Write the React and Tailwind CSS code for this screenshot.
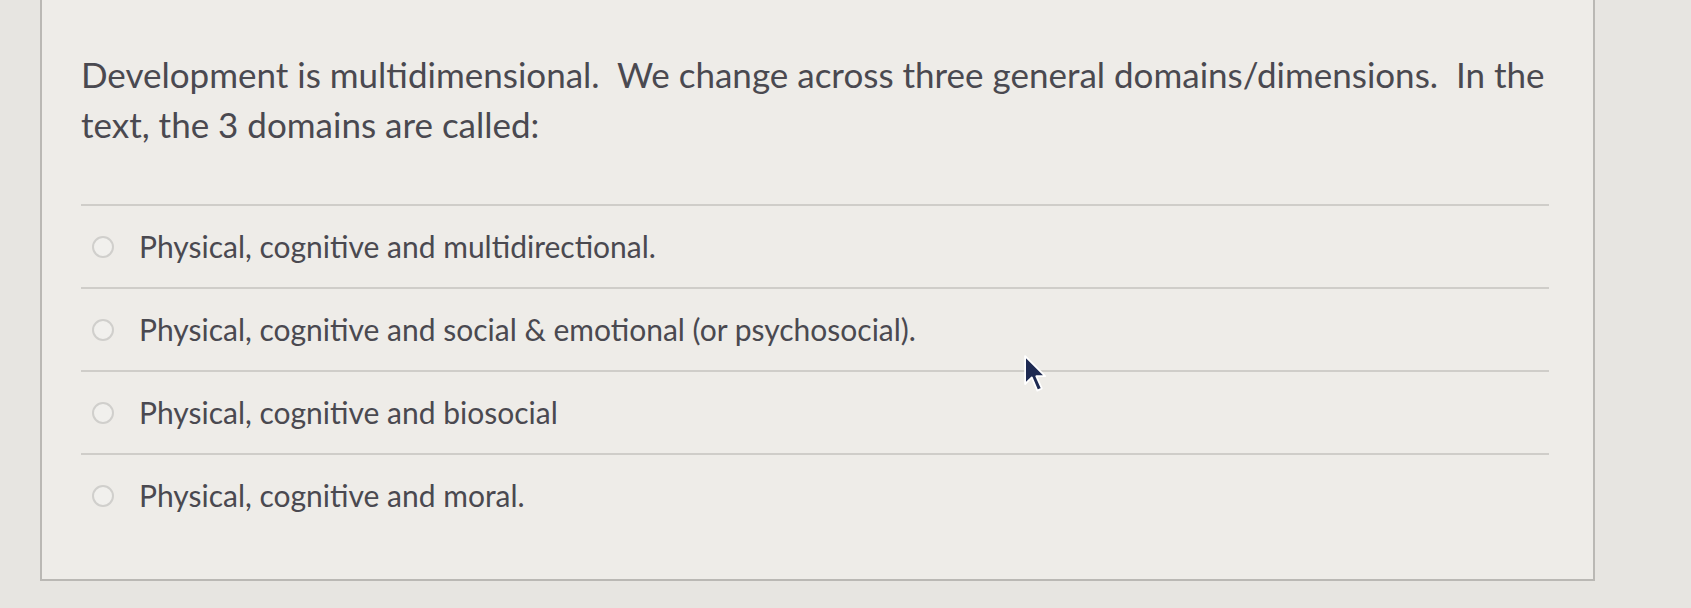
import React from "react";

const question =
  "Development is multidimensional.\u00a0 We change across three general domains/dimensions.\u00a0 In the text, the 3 domains are called:";

const options = [
  "Physical, cognitive and multidirectional.",
  "Physical, cognitive and social & emotional (or psychosocial).",
  "Physical, cognitive and biosocial",
  "Physical, cognitive and moral.",
];

function Cursor() {
  return (
    <svg
      className="absolute left-[1021px] top-[354px]"
      width="26"
      height="40"
      viewBox="0 0 22 36"
    >
      <path
        d="M3 2 L3 27 L9 21 L14 33 L18 31 L13 20 L21 20 Z"
        fill="#1e2a52"
        stroke="#ffffff"
        strokeWidth="1.6"
        strokeLinejoin="round"
      />
    </svg>
  );
}

export default function App() {
  return (
    <div
      className="relative w-[1691px] h-[608px] bg-[#e7e5e1] pl-[40px] overflow-hidden"
      style={{ fontFamily: "Lato, 'Open Sans', sans-serif" }}
    >
      <div className="w-[1555px] border-x-2 border-b-2 border-[#bab8b4] bg-[#eeece8] pt-[49px] pl-[39px] pr-[44px] pb-[43px]">
        {/* Pregunta */}
        <p className="text-[35px] leading-[50px] text-[#4a4950]">{question}</p>

        {/* Opciones */}
        <div className="mt-[55px]">
          {options.map((opt) => (
            <label
              key={opt}
              className="flex items-center gap-[25px] border-t-2 border-[#cfcdc9] py-[22px]"
            >
              <span className="ml-[11px] w-[22px] h-[22px] shrink-0 rounded-full border-2 border-[#d0cfcc] bg-[#f1f0ed]" />
              <span className="text-[30px] leading-[37px] text-[#4a4950]">{opt}</span>
            </label>
          ))}
        </div>
      </div>

      <Cursor />
    </div>
  );
}
